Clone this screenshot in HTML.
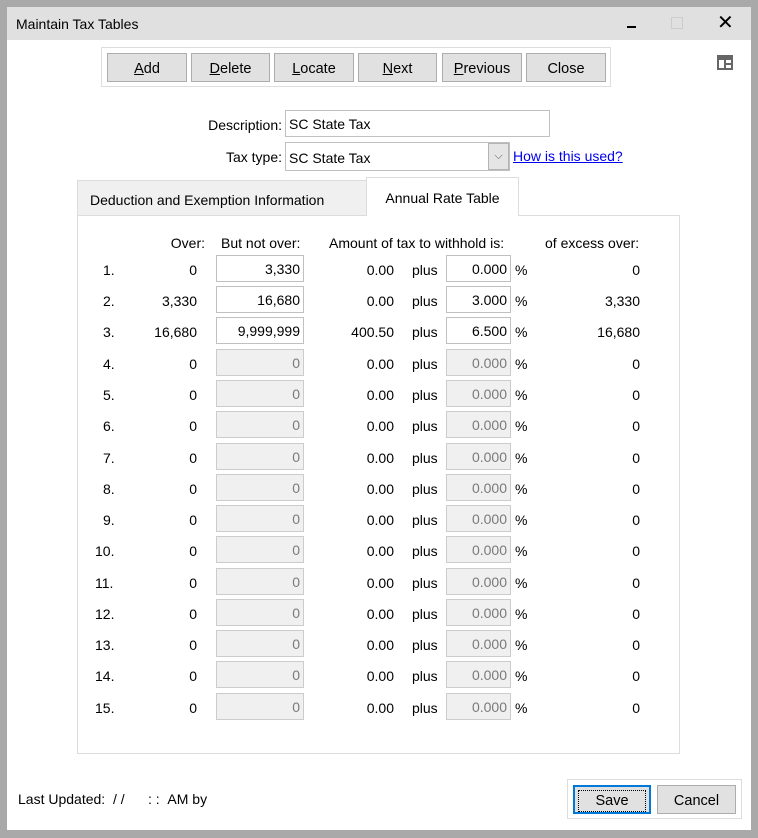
<!DOCTYPE html>
<html><head><meta charset="utf-8"><style>
*{box-sizing:border-box;margin:0;padding:0}
body{width:758px;height:838px;background:#a9a9a9;font-family:"Liberation Sans",sans-serif;font-size:14px;color:#000;position:relative;overflow:hidden}
.a{position:absolute;white-space:nowrap}
.win{position:absolute;left:7px;top:7px;width:744px;height:823px;background:#fff}
.title{position:absolute;left:7px;top:7px;width:744px;height:33px;background:#e0e0e0}
.btn{position:absolute;top:53px;height:29px;background:#e1e1e1;border:1px solid #adadad;text-align:center;line-height:30px;font-size:14.5px}
.box{position:absolute;height:27px;border:1px solid #c0c0c0;background:#fff;text-align:right;padding-right:3px;line-height:27px}
.dis{background:#f0f0f0;color:#7a7a7a;border-color:#cccccc}
.r{text-align:right}
</style></head><body>
<div class="win"></div>
<div class="title"></div>
<div class="a" style="left:16px;top:16px;font-size:14px">Maintain Tax Tables</div>
<div class="a" style="left:627px;top:26px;width:9px;height:2px;background:#000"></div>
<div class="a" style="left:671px;top:17px;width:12px;height:12px;border:1px solid #ccc"></div>
<div class="a" style="left:717px;top:10px;font-size:20px">✕</div>

<div class="a" style="left:101px;top:47px;width:510px;height:40px;border:1px solid #ddd"></div>
<div class="btn" style="left:107px;width:80px"><u>A</u>dd</div>
<div class="btn" style="left:191px;width:79px"><u>D</u>elete</div>
<div class="btn" style="left:274px;width:80px"><u>L</u>ocate</div>
<div class="btn" style="left:358px;width:79px"><u>N</u>ext</div>
<div class="btn" style="left:442px;width:80px"><u>P</u>revious</div>
<div class="btn" style="left:526px;width:80px">Close</div>

<div class="a" style="left:717px;top:55px;width:16px;height:15px;background:#666"></div>
<div class="a" style="left:719px;top:60px;width:5px;height:8px;background:#fff"></div>
<div class="a" style="left:726px;top:60px;width:5px;height:3px;background:#fff"></div>
<div class="a" style="left:726px;top:65px;width:5px;height:3px;background:#fff"></div>

<div class="a r" style="left:180px;top:117px;width:102px">Description:</div>
<div class="a" style="left:285px;top:110px;width:265px;height:27px;border:1px solid #c0c0c0;padding-left:3px;line-height:27px">SC State Tax</div>
<div class="a r" style="left:180px;top:149px;width:102px">Tax type:</div>
<div class="a" style="left:285px;top:142px;width:225px;height:29px;border:1px solid #c0c0c0;padding-left:3px;line-height:30px">SC State Tax</div>
<div class="a" style="left:488px;top:143px;width:21px;height:27px;background:#e5e5e5;border:1px solid #b4b4b4;text-align:center;font-size:11px;line-height:25px;color:#555">⌵</div>
<div class="a" style="left:513px;top:148px;color:#0000ee;text-decoration:underline">How is this used?</div>

<div class="a" style="left:77px;top:215px;width:603px;height:539px;border:1px solid #dcdcdc"></div>
<div class="a" style="left:77px;top:180px;width:290px;height:36px;background:#f0f0f0;border:1px solid #dcdcdc;padding-left:12px;line-height:38px">Deduction and Exemption Information</div>
<div class="a" style="left:366px;top:177px;width:153px;height:39px;background:#fff;border:1px solid #dcdcdc;border-bottom:none;text-align:center;line-height:40px">Annual Rate Table</div>

<div class="a r" style="left:140px;top:235px;width:65px">Over:</div>
<div class="a" style="left:221px;top:235px">But not over:</div>
<div class="a" style="left:329px;top:235px">Amount of tax to withhold is:</div>
<div class="a" style="left:545px;top:235px">of excess over:</div>

<div id="rows"></div>
<script>
var d=[["0","3,330","0.00","0.000","0",1],["3,330","16,680","0.00","3.000","3,330",1],["16,680","9,999,999","400.50","6.500","16,680",1]];
var tops=[255,286,317,349,380,411,443,474,505,536,568,599,630,661,693];
var h="";
for(var i=0;i<15;i++){var r=d[i]||["0","0","0.00","0.000","0",0];var t=tops[i];var ty=t+7;
h+='<div class="a" style="left:'+(i<9?103:95)+'px;top:'+ty+'px">'+(i+1)+'.</div>';
h+='<div class="a r" style="left:120px;top:'+ty+'px;width:77px">'+r[0]+'</div>';
h+='<div class="box'+(r[5]?'':' dis')+'" style="left:216px;top:'+t+'px;width:88px">'+r[1]+'</div>';
h+='<div class="a r" style="left:320px;top:'+ty+'px;width:74px">'+r[2]+'</div>';
h+='<div class="a" style="left:412px;top:'+ty+'px">plus</div>';
h+='<div class="box'+(r[5]?'':' dis')+'" style="left:446px;top:'+t+'px;width:65px">'+r[3]+'</div>';
h+='<div class="a" style="left:515px;top:'+ty+'px">%</div>';
h+='<div class="a r" style="left:560px;top:'+ty+'px;width:80px">'+r[4]+'</div>';}
document.getElementById("rows").innerHTML=h;
</script>

<div class="a" style="left:18px;top:791px">Last Updated:&nbsp;&nbsp;/ /&nbsp;&nbsp;&nbsp;&nbsp;&nbsp;&nbsp;: :&nbsp;&nbsp;AM by</div>
<div class="a" style="left:567px;top:779px;width:175px;height:40px;border:1px solid #ddd"></div>
<div class="a" style="left:573px;top:785px;width:78px;height:29px;background:#e1e1e1;border:2px solid #0078d7;text-align:center;line-height:28px;font-size:14.5px"><span style="outline:1px dotted #000;outline-offset:2px;padding:0 14px">Save</span></div>
<div class="a" style="left:657px;top:785px;width:79px;height:29px;background:#e1e1e1;border:1px solid #adadad;text-align:center;line-height:30px;font-size:14.5px">Cancel</div>
</body></html>
